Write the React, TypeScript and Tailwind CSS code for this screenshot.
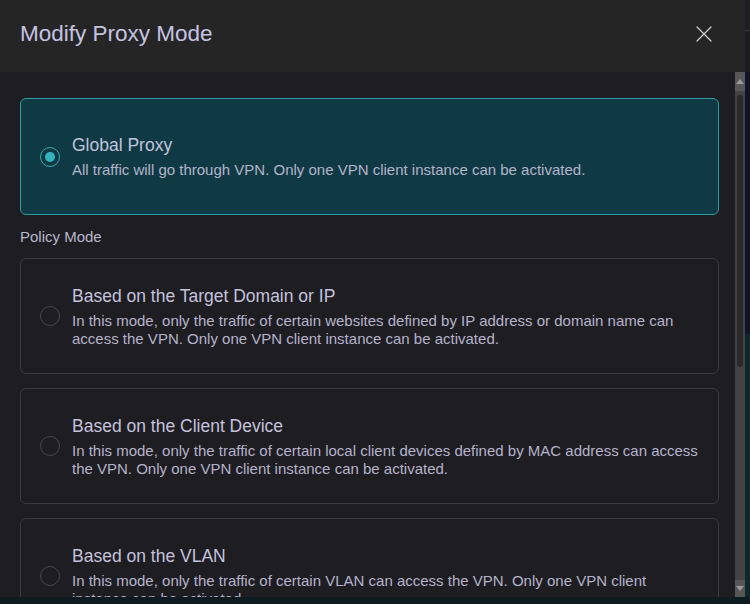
import { X } from 'lucide-react';

interface ModeOption {
  title: string;
  desc: string;
  selected?: boolean;
}

const policyModes: ModeOption[] = [
  {
    title: 'Based on the Target Domain or IP',
    desc: 'In this mode, only the traffic of certain websites defined by IP address or domain name can access the VPN. Only one VPN client instance can be activated.',
  },
  {
    title: 'Based on the Client Device',
    desc: 'In this mode, only the traffic of certain local client devices defined by MAC address can access the VPN. Only one VPN client instance can be activated.',
  },
  {
    title: 'Based on the VLAN',
    desc: 'In this mode, only the traffic of certain VLAN can access the VPN. Only one VPN client instance can be activated.',
  },
];

const ModeCard = ({ title, desc, selected }: ModeOption) => (
  <div
    className={
      selected
        ? 'flex h-[117px] shrink-0 items-center gap-3 rounded-md border border-[#2c9ca4] bg-[#0f3a44] pl-[19px] pr-[18px]'
        : 'flex h-[116px] shrink-0 items-center gap-3 rounded-md border border-[#3b3a40] bg-[#1e1d22] pl-[19px] pr-[18px]'
    }
  >
    {selected ? (
      <div className="flex h-5 w-5 shrink-0 items-center justify-center rounded-full border-[1.5px] border-[#3ba8b1]">
        <div className="h-[10px] w-[10px] rounded-full bg-[#35b2bf]" />
      </div>
    ) : (
      <div className="h-5 w-5 shrink-0 rounded-full border-[1.5px] border-[#47464c]" />
    )}
    <div className="flex flex-col">
      <div className="text-[17.5px] leading-[22px] text-[#c4c2de]">{title}</div>
      <div className="mt-[5px] text-[15px] leading-[18px] text-[#b5b3cb]">{desc}</div>
    </div>
  </div>
);

export default function App() {
  return (
    <div
      className="flex h-[604px] w-[750px] flex-col overflow-hidden bg-[#0e1b20]"
      style={{ fontFamily: '"Liberation Sans", Arial, sans-serif' }}
    >
      <div className="flex min-h-0 flex-1">
        {/* dialog */}
        <div className="flex w-[745px] flex-col">
          <div className="flex h-[72px] shrink-0 items-center justify-between bg-[#252525] pb-[4px] pl-5 pr-[27px]">
            <h1 className="text-[22.5px] text-[#c5c3e3]">Modify Proxy Mode</h1>
            <X className="h-7 w-7 text-[#cfcfd4]" strokeWidth={1.1} />
          </div>
          <div className="flex min-h-0 flex-1">
            <div className="flex w-[735px] flex-col overflow-hidden bg-[#1e1d22] pl-5 pr-4 pt-[26px]">
              <ModeCard
                title="Global Proxy"
                desc="All traffic will go through VPN. Only one VPN client instance can be activated."
                selected
              />
              <div className="mb-[13px] mt-[13px] text-[15px] leading-[17px] text-[#b9b7cd]">Policy Mode</div>
              <div className="flex flex-col gap-[14px]">
                {policyModes.map(m => (
                  <ModeCard key={m.title} {...m} />
                ))}
              </div>
            </div>
            {/* scrollbar */}
            <div className="flex w-[10px] flex-col bg-[#434343]">
              <div className="flex h-[19px] items-center justify-center bg-[#575757]">
                <div className="h-0 w-0 border-x-[4px] border-b-[5px] border-x-transparent border-b-[#9a9a9a]" />
              </div>
              <div className="mx-[2px] mt-[4px] h-[272px] rounded-full bg-[#2a2a2c]" />
              <div className="flex-1" />
              <div className="flex h-[17px] items-center justify-center bg-[#575757]">
                <div className="h-0 w-0 border-x-[4px] border-t-[5px] border-x-transparent border-t-[#9a9a9a]" />
              </div>
            </div>
          </div>
        </div>
        {/* page behind */}
        <div className="flex w-[5px] flex-col">
          <div className="h-[30px] bg-[#1d1d24]" />
          <div className="h-[1px] bg-[#3a3a44]" />
          <div className="h-[41px] bg-[#1b1b22]" />
          <div className="h-[262px] bg-[#12142a]" />
          <div className="flex-1 bg-[#10272d]" />
        </div>
      </div>
      <div className="h-[7px] shrink-0 bg-[#0e1b20]" />
    </div>
  );
}
